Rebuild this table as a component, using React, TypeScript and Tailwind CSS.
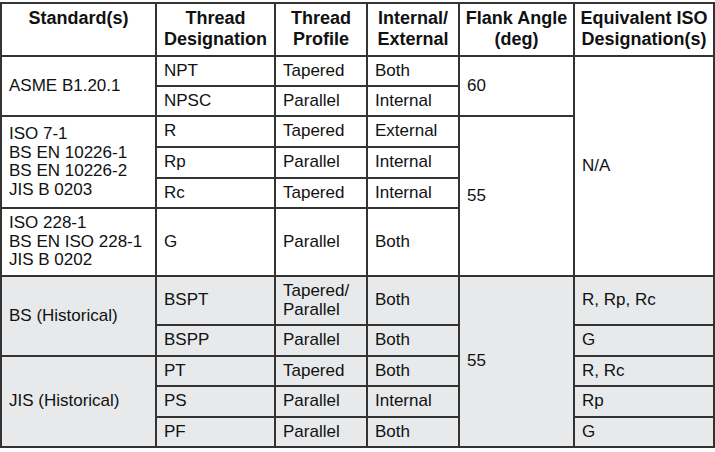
import type { ReactNode } from "react";

const cell = "border-2 border-[#333] pl-[7px] pr-0 align-middle leading-[18.5px]";

function Td({ children, rowSpan, className = "" }: { children: ReactNode; rowSpan?: number; className?: string }) {
  return (
    <td rowSpan={rowSpan} className={`${cell} ${className}`}>
      {children}
    </td>
  );
}

export default function App() {
  return (
    <div className="w-[715px] h-[452px] bg-white pt-[2px] font-['Liberation_Sans',Arial,sans-serif] text-[#111]">
      <table className="w-[713px] table-fixed border-collapse text-[17px]">
        <colgroup>
          <col className="w-[155px]" />
          <col className="w-[119px]" />
          <col className="w-[92px]" />
          <col className="w-[92px]" />
          <col className="w-[115px]" />
          <col className="w-[140px]" />
        </colgroup>
        <thead>
          <tr className="h-[53px]">
            {[
              ["Standard(s)"],
              ["Thread", "Designation"],
              ["Thread", "Profile"],
              ["Internal/", "External"],
              ["Flank Angle", "(deg)"],
              ["Equivalent ISO", "Designation(s)"],
            ].map((lines) => (
              <th
                key={lines.join()}
                className="border-2 border-[#333] px-0 pt-[4px] align-top text-center text-[18px] font-bold leading-[21px] whitespace-nowrap"
              >
                {lines.map((l) => (
                  <div key={l}>{l}</div>
                ))}
              </th>
            ))}
          </tr>
        </thead>
        <tbody>
          <tr className="h-[30px]">
            <Td rowSpan={2}>ASME B1.20.1</Td>
            <Td>NPT</Td>
            <Td>Tapered</Td>
            <Td>Both</Td>
            <Td rowSpan={2}>60</Td>
            <Td rowSpan={6}>N/A</Td>
          </tr>
          <tr className="h-[30px]">
            <Td>NPSC</Td>
            <Td>Parallel</Td>
            <Td>Internal</Td>
          </tr>
          <tr className="h-[31px]">
            <Td rowSpan={3}>
              ISO 7-1
              <br />
              BS EN 10226-1
              <br />
              BS EN 10226-2
              <br />
              JIS B 0203
            </Td>
            <Td>R</Td>
            <Td>Tapered</Td>
            <Td>External</Td>
            <Td rowSpan={4}>55</Td>
          </tr>
          <tr className="h-[31px]">
            <Td>Rp</Td>
            <Td>Parallel</Td>
            <Td>Internal</Td>
          </tr>
          <tr className="h-[30px]">
            <Td>Rc</Td>
            <Td>Tapered</Td>
            <Td>Internal</Td>
          </tr>
          <tr className="h-[68px]">
            <Td className="whitespace-nowrap">
              ISO 228-1
              <br />
              BS EN ISO 228-1
              <br />
              JIS B 0202
            </Td>
            <Td>G</Td>
            <Td>Parallel</Td>
            <Td>Both</Td>
          </tr>

          {/* historical designations */}
          <tr className="h-[49px] bg-[#e8e9eb]">
            <Td rowSpan={2}>BS (Historical)</Td>
            <Td>BSPT</Td>
            <Td>
              Tapered/
              <br />
              Parallel
            </Td>
            <Td>Both</Td>
            <Td rowSpan={5}>55</Td>
            <Td>R, Rp, Rc</Td>
          </tr>
          <tr className="h-[31px] bg-[#e8e9eb]">
            <Td>BSPP</Td>
            <Td>Parallel</Td>
            <Td>Both</Td>
            <Td>G</Td>
          </tr>
          <tr className="h-[30px] bg-[#e8e9eb]">
            <Td rowSpan={3}>JIS (Historical)</Td>
            <Td>PT</Td>
            <Td>Tapered</Td>
            <Td>Both</Td>
            <Td>R, Rc</Td>
          </tr>
          <tr className="h-[31px] bg-[#e8e9eb]">
            <Td>PS</Td>
            <Td>Parallel</Td>
            <Td>Internal</Td>
            <Td>Rp</Td>
          </tr>
          <tr className="h-[30px] bg-[#e8e9eb]">
            <Td>PF</Td>
            <Td>Parallel</Td>
            <Td>Both</Td>
            <Td>G</Td>
          </tr>
        </tbody>
      </table>
    </div>
  );
}
